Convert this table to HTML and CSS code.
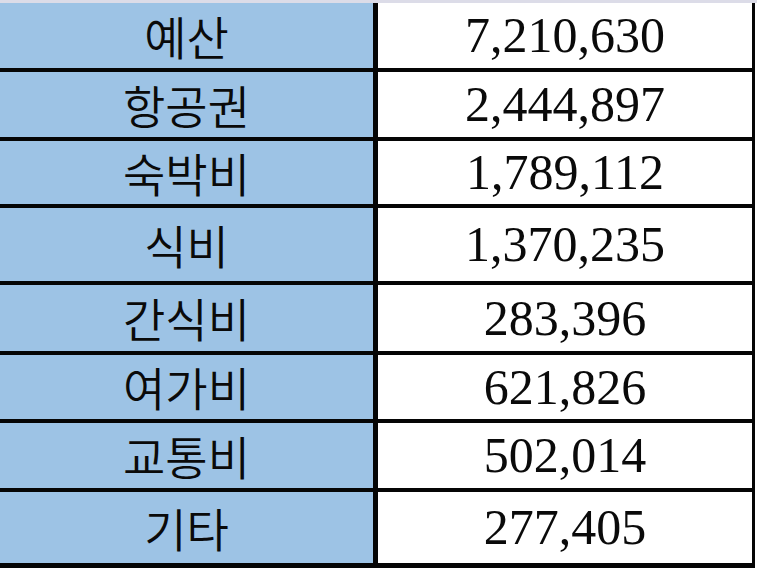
FILE: index.html
```html
<!DOCTYPE html>
<html lang="ko">
<head>
<meta charset="utf-8">
<title>예산</title>
<link rel="stylesheet" href="styles.css">
</head>
<body>
<div class="strip"></div>
<div class="sheet">
  <div class="label">예산</div><div class="value">7,210,630</div>
  <div class="label">항공권</div><div class="value">2,444,897</div>
  <div class="label">숙박비</div><div class="value">1,789,112</div>
  <div class="label">식비</div><div class="value">1,370,235</div>
  <div class="label">간식비</div><div class="value">283,396</div>
  <div class="label">여가비</div><div class="value">621,826</div>
  <div class="label">교통비</div><div class="value">502,014</div>
  <div class="label last">기타</div><div class="value last">277,405</div>
</div>
</body>
</html>
```
FILE: styles.css
```css
html, body {
  margin: 0;
  padding: 0;
  background: #ffffff;
}
.strip {
  height: 3px;
  background: #dcdce8;
}
.sheet {
  display: grid;
  width: 755px;
  grid-template-columns: 373px 382px;
  grid-template-rows: 69px 69px 67px 77px 70px 68px 69px 76px;
}
.label, .value {
  box-sizing: border-box;
  display: flex;
  align-items: center;
  justify-content: center;
  border-bottom: 4px solid #050505;
  color: #0a0a0a;
}
.label {
  background: #9dc3e5;
  font-family: "Noto Sans CJK KR", "Noto Sans", sans-serif;
  font-size: 46px;
  font-weight: 350;
  padding-bottom: 2px;
}
.value {
  background: #ffffff;
  border-left: 5px solid #050505;
  border-right: 3px solid #050505;
  font-family: "Liberation Serif", "Times New Roman", serif;
  font-size: 50px;
  padding-bottom: 1px;
}
.last {
  border-bottom-width: 5px;
}
```
